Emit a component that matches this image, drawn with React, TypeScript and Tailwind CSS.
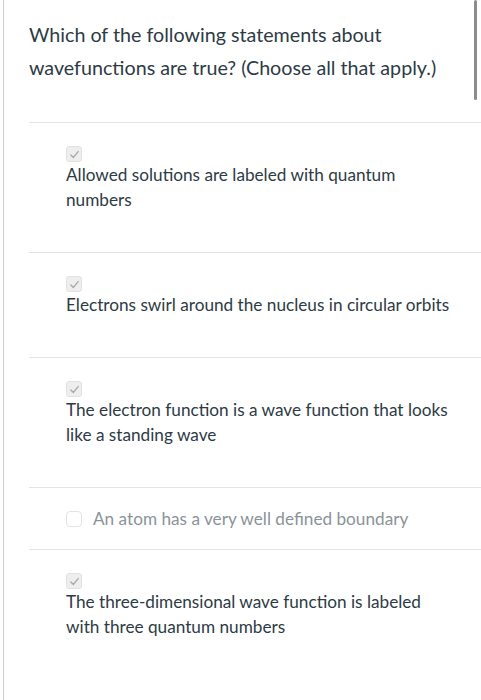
import React from "react";

type Answer = { text: string[]; checked: boolean };

const answers: Answer[] = [
  { text: ["Allowed solutions are labeled with quantum", "numbers"], checked: true },
  { text: ["Electrons swirl around the nucleus in circular orbits"], checked: true },
  { text: ["The electron function is a wave function that looks", "like a standing wave"], checked: true },
  { text: ["An atom has a very well defined boundary"], checked: false },
  { text: ["The three-dimensional wave function is labeled", "with three quantum numbers"], checked: true }
];

const CheckedBox = () => (
  <span className="flex h-[16px] w-[16px] items-center justify-center rounded-[3px] border border-[#e2e2e2] bg-[#eeeeee]">
    <svg width="11" height="11" viewBox="0 0 12 12" fill="none">
      <path d="M2 6.5 L4.8 9.2 L10 2.8" stroke="#a9a9a9" strokeWidth="1.5" strokeLinecap="round" strokeLinejoin="round" />
    </svg>
  </span>
);

const EmptyBox = () => (
  <span className="block h-[16px] w-[16px] shrink-0 rounded-[4px] border border-[#e3e3e3] bg-white" />
);

export default function App() {
  return (
    <div className="relative min-h-[700px] bg-white font-['Lato','Open_Sans',sans-serif] text-[#2d3b45]">
      <div className="ml-[3px] min-h-[700px] border-l border-[#c9cdd0] pl-[25px]">
        <p className="pt-[18px] pb-[38px] text-[19.7px] leading-[33px]">
          Which of the following statements about
          <br />
          wavefunctions are true? (Choose all that apply.)
        </p>

        <ul>
          {answers.map((a, i) =>
            a.checked ? (
              <li key={i} className="border-t border-[#e4e4e4] pl-[37px] pt-[23px] pb-[40px]">
                <CheckedBox />
                <div className="text-[17.2px] leading-[25px]">
                  {a.text.map((line, j) => (
                    <div key={j}>{line}</div>
                  ))}
                </div>
              </li>
            ) : (
              <li key={i} className="flex items-center gap-[11px] border-t border-[#e4e4e4] pl-[37px] py-[18px]">
                <EmptyBox />
                <span className="text-[17.2px] leading-[25px] text-[#8b9399]">{a.text[0]}</span>
              </li>
            )
          )}
        </ul>
      </div>

      <div className="absolute left-[474px] top-0 h-[100px] w-[3px] rounded-full bg-[#8c8c8c]" />
    </div>
  );
}
